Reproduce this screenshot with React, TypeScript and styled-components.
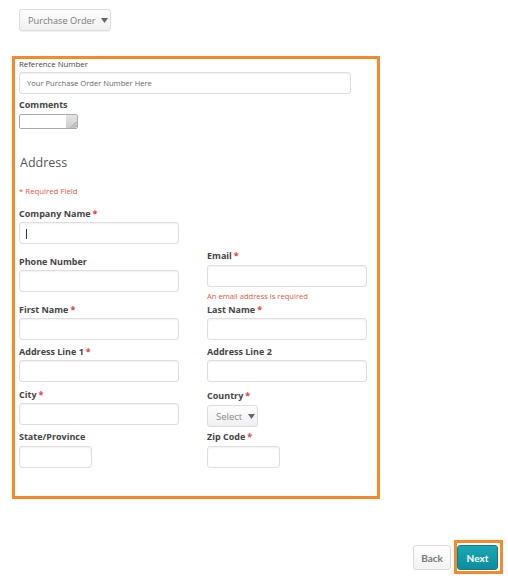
import React from "react";
import styled, { createGlobalStyle } from "styled-components";

const GlobalStyle = createGlobalStyle`
  html, body { margin: 0; padding: 0; background: #ffffff; }
  body { font-family: "Open Sans", "Liberation Sans", sans-serif; color: #444; }
  * { box-sizing: border-box; }
`;

const ORANGE = "#f7892b";

const Page = styled.div`
  width: 508px;
  padding: 9px 5px 7px 12px;
  display: flex;
  flex-direction: column;
`;

const TypeButton = styled.button`
  align-self: flex-start;
  margin-left: 7px;
  width: 92px;
  height: 22px;
  padding: 0 0 0 8px;
  display: flex;
  align-items: center;
  gap: 6px;
  white-space: nowrap;
  border: 1px solid #dcdcdc;
  border-radius: 3px;
  background: linear-gradient(#fdfdfd, #f1f1f1);
  box-shadow: 0 1px 1px rgba(0, 0, 0, 0.06);
  font-family: "Open Sans", "Liberation Sans", sans-serif;
  font-size: 9.2px;
  color: #7a7a7a;
  cursor: pointer;
`;

const Highlight = styled.section`
  margin-top: 25px;
  width: 368px;
  border: 3px solid ${ORANGE};
  padding: 0 4px 28px 4px;
  display: flex;
  flex-direction: column;
`;

const SmallLabel = styled.label`
  display: block;
  font-size: 7.8px;
  line-height: 10px;
  color: #444;
  margin-bottom: 3px;
`;

const Label = styled.label<{ $mt?: number; $gap?: number }>`
  display: block;
  font-size: 9px;
  line-height: 12px;
  font-weight: 700;
  color: #444;
  white-space: nowrap;
  margin-top: ${(p) => p.$mt ?? 0}px;
  margin-bottom: ${(p) => p.$gap ?? 2}px;
`;

const Star = styled.span`
  color: #e8393b;
  font-weight: 700;
  margin-left: 2px;
`;

const TextInput = styled.input<{ $w?: number }>`
  display: block;
  width: ${(p) => p.$w ?? 160}px;
  height: 22px;
  border: 1px solid #dedede;
  border-radius: 3px;
  background: #fff;
  box-shadow: inset 0 1px 2px rgba(0, 0, 0, 0.06);
  padding: 0 7px;
  font-family: "Open Sans", "Liberation Sans", sans-serif;
  font-size: 7.6px;
  color: #555;
  outline: none;
  &::placeholder { color: #666; }
`;

const CaretWrap = styled.div`
  position: relative;
  width: 160px;
  &::after {
    content: "";
    position: absolute;
    left: 7px;
    top: 7px;
    width: 1px;
    height: 10px;
    background: #333;
  }
`;

const CommentBox = styled.div`
  display: flex;
  width: 59px;
  height: 15px;
  border: 1px solid #a9a9a9;
  border-radius: 2px;
  overflow: hidden;
  background: #fff;
`;

const CommentArea = styled.textarea`
  flex: 1;
  min-width: 0;
  border: none;
  resize: none;
  outline: none;
  padding: 0;
  background: transparent;
`;

const Grip = styled.div`
  width: 11px;
  background: linear-gradient(#e6e6e6, #cfcfcf);
  display: flex;
  align-items: flex-end;
  justify-content: flex-end;
`;

const Heading = styled.h2`
  margin: 25px 0 0 1px;
  font-size: 12.5px;
  line-height: 18px;
  font-weight: 400;
  color: #555;
`;

const Required = styled.div`
  margin-top: 14px;
  font-size: 7.8px;
  line-height: 10px;
  color: #e0583d;
`;

const Row = styled.div<{ $mt: number }>`
  display: flex;
  align-items: flex-start;
  gap: 28px;
  margin-top: ${(p) => p.$mt}px;
`;

const Field = styled.div<{ $pt?: number }>`
  width: 160px;
  display: flex;
  flex-direction: column;
  padding-top: ${(p) => p.$pt ?? 0}px;
`;

const ErrorText = styled.div`
  margin-top: 4px;
  font-size: 7.6px;
  line-height: 10px;
  color: #e0583d;
  white-space: nowrap;
`;

const SelectButton = styled.button`
  width: 51px;
  height: 22px;
  display: flex;
  align-items: center;
  gap: 6px;
  padding: 0 0 0 8px;
  border: 1px solid #dcdcdc;
  border-radius: 3px;
  background: linear-gradient(#fdfdfd, #f0f0f0);
  font-family: "Open Sans", "Liberation Sans", sans-serif;
  font-size: 9.5px;
  color: #888;
  cursor: pointer;
`;

const Footer = styled.div`
  margin-top: 41px;
  display: flex;
  justify-content: flex-end;
  align-items: center;
  gap: 3px;
`;

const BackButton = styled.button`
  width: 38px;
  height: 25px;
  margin-top: 1px;
  border: 1px solid #dadada;
  border-radius: 3px;
  background: linear-gradient(#ffffff, #f3f3f3);
  font-family: Lato, "Liberation Sans", sans-serif;
  font-weight: 700;
  font-size: 10px;
  color: #777;
  padding: 0;
  cursor: pointer;
`;

const NextOutline = styled.div`
  border: 3px solid ${ORANGE};
  padding: 2px 2px 1px 0;
  display: flex;
`;

const NextButton = styled.button`
  width: 41px;
  height: 25px;
  border: 1px solid #0a7f8b;
  border-radius: 3px;
  background: linear-gradient(#1aa6b4, #0c8e9b);
  font-family: Lato, "Liberation Sans", sans-serif;
  font-weight: 700;
  font-size: 10px;
  color: #fff;
  padding: 0;
  cursor: pointer;
`;

const Caret = ({ color = "#666" }: { color?: string }) => (
  <svg width="7" height="5" viewBox="0 0 7 5" aria-hidden="true">
    <path d="M0 0 H7 L3.5 5 Z" fill={color} />
  </svg>
);

const GripLines = () => (
  <svg width="8" height="8" viewBox="0 0 8 8" aria-hidden="true">
    <path d="M7.5 2 L2 7.5 M7.5 5 L5 7.5" stroke="#8a8a8a" strokeWidth="0.8" />
  </svg>
);

export default function App() {
  return (
    <>
      <GlobalStyle />
      <Page>
        <TypeButton>
          Purchase Order <Caret color="#666" />
        </TypeButton>
        <Highlight>
          <SmallLabel>Reference Number</SmallLabel>
          <TextInput $w={332} placeholder="Your Purchase Order Number Here" />
          <Label $mt={5} $gap={3}>Comments</Label>
          <CommentBox>
            <CommentArea />
            <Grip>
              <GripLines />
            </Grip>
          </CommentBox>
          <Heading>Address</Heading>
          <Required>* Required Field</Required>

          <Row $mt={12}>
            <Field>
              <Label>
                Company Name<Star>*</Star>
              </Label>
              <CaretWrap>
                <TextInput />
              </CaretWrap>
            </Field>
          </Row>

          <Row $mt={6}>
            <Field $pt={6}>
              <Label>Phone Number</Label>
              <TextInput />
            </Field>
            <Field>
              <Label $gap={3}>
                Email<Star>*</Star>
              </Label>
              <TextInput />
              <ErrorText>An email address is required</ErrorText>
            </Field>
          </Row>

          <Row $mt={3}>
            <Field>
              <Label>
                First Name<Star>*</Star>
              </Label>
              <TextInput />
            </Field>
            <Field>
              <Label>
                Last Name<Star>*</Star>
              </Label>
              <TextInput />
            </Field>
          </Row>

          <Row $mt={6}>
            <Field>
              <Label>
                Address Line 1<Star>*</Star>
              </Label>
              <TextInput />
            </Field>
            <Field>
              <Label>Address Line 2</Label>
              <TextInput />
            </Field>
          </Row>

          <Row $mt={7}>
            <Field>
              <Label>
                City<Star>*</Star>
              </Label>
              <TextInput />
            </Field>
            <Field $pt={1}>
              <Label $gap={3}>
                Country<Star>*</Star>
              </Label>
              <SelectButton>
                Select <Caret color="#666" />
              </SelectButton>
            </Field>
          </Row>

          <Row $mt={4}>
            <Field>
              <Label $gap={3}>State/Province</Label>
              <TextInput $w={73} />
            </Field>
            <Field>
              <Label $gap={3}>
                Zip Code<Star>*</Star>
              </Label>
              <TextInput $w={73} />
            </Field>
          </Row>
        </Highlight>

        <Footer>
          <BackButton>Back</BackButton>
          <NextOutline>
            <NextButton>Next</NextButton>
          </NextOutline>
        </Footer>
      </Page>
    </>
  );
}
